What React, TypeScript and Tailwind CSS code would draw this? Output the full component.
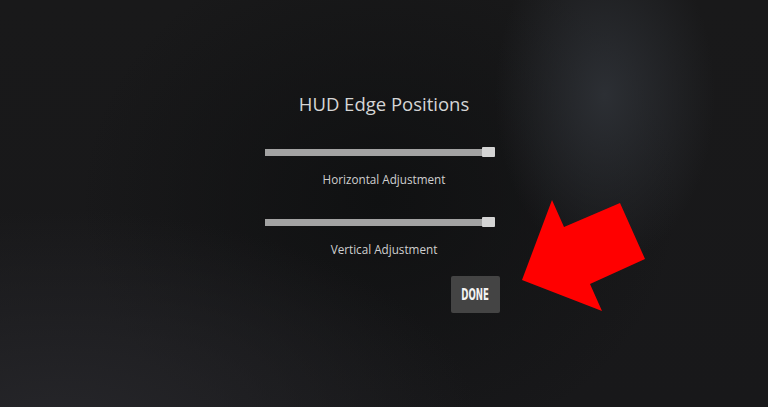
import React from "react";

function Slider() {
  return (
    <div className="relative mr-[8px] flex h-[10px] w-[230px] items-center">
      <div className="h-[7px] w-full bg-[#a3a3a3]" />
      <div className="absolute right-0 top-0 h-[10px] w-[13px] rounded-[1px] bg-[#d4d4d4]" />
    </div>
  );
}

export default function App() {
  return (
    <div
      className="relative h-[407px] w-[768px] overflow-hidden bg-[radial-gradient(ellipse_110px_170px_at_605px_95px,#2c2f34,transparent),radial-gradient(ellipse_420px_220px_at_60px_430px,#26262a,transparent),radial-gradient(ellipse_300px_260px_at_380px_200px,#101112,transparent),linear-gradient(180deg,#19191a,#18181a)]"
      style={{ fontFamily: '"Open Sans", "Noto Sans", sans-serif' }}
    >
      <div className="flex flex-col items-center pt-[91px]">
        <h1 className="h-[26px] text-[18.5px] leading-[26px] text-[#d6d6d6]">HUD Edge Positions</h1>
        <div className="mt-[30px]">
          <Slider />
        </div>
        <div className="mt-[14px] h-[16px] text-[11.7px] leading-[16px] text-[#cfcfcf]">Horizontal Adjustment</div>
        <div className="mt-[30px]">
          <Slider />
        </div>
        <div className="mt-[14px] h-[16px] text-[11.7px] leading-[16px] text-[#cfcfcf]">Vertical Adjustment</div>
        <div className="mr-[3px] mt-[19px] flex w-[235px] justify-end">
          <button className="flex h-[37px] w-[49px] items-center justify-center rounded-[2px] bg-[#444444]">
            <span
              className="inline-block scale-x-[0.6] text-[16px] font-bold leading-none text-[#f2f2f2]"
              style={{ fontFamily: '"DejaVu Sans Condensed", "DejaVu Sans", sans-serif' }}
            >
              DONE
            </span>
          </button>
        </div>
      </div>
      <svg className="absolute left-0 top-0" width="768" height="407" viewBox="0 0 768 407">
        <polygon
          points="552,200 564,227 620,203 645,259 590,284 602,311 522,280"
          fill="#ff0000"
        />
      </svg>
    </div>
  );
}
